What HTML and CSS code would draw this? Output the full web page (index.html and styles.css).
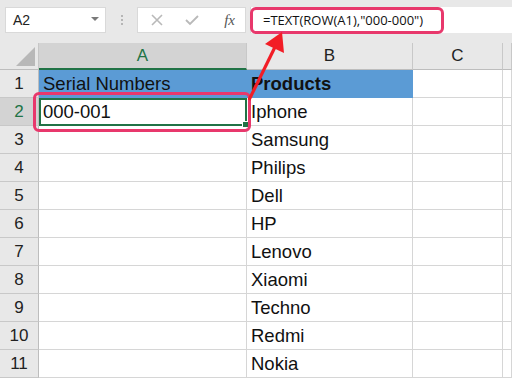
FILE: index.html
```html
<!DOCTYPE html>
<html>
<head>
  <title>Serial Numbers</title>
  <link rel="stylesheet" href="styles.css">
</head>
<body>
  <div class="app">
    <div class="toolbar">
      <div class="namebox">
        <span>A2</span>
        <span class="caret"></span>
      </div>
      <div class="grip"><i></i><i></i><i></i></div>
      <div class="fxbox">
        <svg class="btn" width="14" height="14" viewBox="0 0 14 14"><path d="M2 2 L12 12 M12 2 L2 12" stroke="#b9b9b9" stroke-width="1.6" fill="none"/></svg>
        <svg class="btn" width="16" height="14" viewBox="0 0 16 14"><path d="M2 7 L6 11 L14 3" stroke="#b9b9b9" stroke-width="1.8" fill="none"/></svg>
        <span class="fx">fx</span>
      </div>
      <div class="formula">=TEXT(ROW(A1),"000-000")</div>
    </div>

    <div class="grid">
      <div class="corner"><span class="tri"></span></div>
      <div class="colhead active">A</div>
      <div class="colhead">B</div>
      <div class="colhead">C</div>
      <div class="colhead"></div>

      <div class="rowhead">1</div>
      <div class="cell title">Serial Numbers</div>
      <div class="cell title bold">Products</div>
      <div class="cell"></div>
      <div class="cell"></div>

      <div class="rowhead active">2</div>
      <div class="cell selected">000-001<span class="handle"></span></div>
      <div class="cell">Iphone</div>
      <div class="cell"></div>
      <div class="cell"></div>

      <div class="rowhead">3</div>
      <div class="cell"></div>
      <div class="cell">Samsung</div>
      <div class="cell"></div>
      <div class="cell"></div>

      <div class="rowhead">4</div>
      <div class="cell"></div>
      <div class="cell">Philips</div>
      <div class="cell"></div>
      <div class="cell"></div>

      <div class="rowhead">5</div>
      <div class="cell"></div>
      <div class="cell">Dell</div>
      <div class="cell"></div>
      <div class="cell"></div>

      <div class="rowhead">6</div>
      <div class="cell"></div>
      <div class="cell">HP</div>
      <div class="cell"></div>
      <div class="cell"></div>

      <div class="rowhead">7</div>
      <div class="cell"></div>
      <div class="cell">Lenovo</div>
      <div class="cell"></div>
      <div class="cell"></div>

      <div class="rowhead">8</div>
      <div class="cell"></div>
      <div class="cell">Xiaomi</div>
      <div class="cell"></div>
      <div class="cell"></div>

      <div class="rowhead">9</div>
      <div class="cell"></div>
      <div class="cell">Techno</div>
      <div class="cell"></div>
      <div class="cell"></div>

      <div class="rowhead">10</div>
      <div class="cell"></div>
      <div class="cell">Redmi</div>
      <div class="cell"></div>
      <div class="cell"></div>

      <div class="rowhead">11</div>
      <div class="cell"></div>
      <div class="cell">Nokia</div>
      <div class="cell"></div>
      <div class="cell"></div>
    </div>

    <!-- annotations drawn over the sheet -->
    <div class="mark mark-formula"></div>
    <div class="mark mark-cell"></div>
    <svg class="arrow" width="512" height="378" viewBox="0 0 512 378">
      <line x1="249" y1="100" x2="275" y2="47" stroke="#f21d26" stroke-width="3.2"/>
      <polygon points="282,32 265,44 284,53" fill="#f21d26"/>
    </svg>
  </div>
</body>
</html>
```

FILE: styles.css
```css
body {
  margin: 0;
  background-color: #fff;
}

.app {
  position: relative;
  width: 512px;
  height: 378px;
  overflow: hidden;
  font-family: "Liberation Sans", Arial, sans-serif;
}

.toolbar {
  display: flex;
  align-items: stretch;
  height: 43px;
  box-sizing: border-box;
  padding: 7px 0 10px 5px;
  background-color: #e8e8e8;
}

.namebox {
  width: 101px;
  box-sizing: border-box;
  display: flex;
  align-items: center;
  justify-content: space-between;
  padding: 0 6px 0 7px;
  background-color: #fff;
  border: 1px solid #d9d9d9;
  font-size: 14px;
  color: #222;
}

.caret {
  width: 0;
  height: 0;
  border-left: 4px solid transparent;
  border-right: 4px solid transparent;
  border-top: 4px solid #7a7a7a;
  margin-bottom: 3px;
}

.grip {
  width: 31px;
  display: flex;
  flex-direction: column;
  align-items: center;
  justify-content: center;
  gap: 2px;
}

.grip i {
  width: 2px;
  height: 2px;
  background-color: #b5b5b5;
}

.fxbox {
  width: 109px;
  box-sizing: border-box;
  display: flex;
  align-items: center;
  padding: 0 10px 0 12px;
  gap: 20px;
  background-color: #fff;
  border: 1px solid #d9d9d9;
}

.fx {
  margin-left: auto;
  font-family: "Liberation Serif", serif;
  font-style: italic;
  font-size: 15px;
  color: #555;
}

.formula {
  flex: 1;
  margin-left: 4px;
  display: flex;
  align-items: center;
  padding-left: 12px;
  background-color: #fff;
  border-left: 1px solid #d9d9d9;
  font-family: "Open Sans", sans-serif;
  font-size: 13px;
  color: #111;
}

.grid {
  display: grid;
  grid-template-columns: 39px 208px 166px 90px 1fr;
  grid-template-rows: 27px repeat(11, 28px);
  font-size: 18.5px;
  color: #111;
}

.grid > div {
  box-sizing: border-box;
  border-right: 1px solid #d6d6d6;
  border-bottom: 1px solid #d6d6d6;
}

.corner {
  position: relative;
  background-color: #e8e8e8;
  border-right-color: #c6c6c6 !important;
  border-bottom-color: #bdbdbd !important;
}

.tri {
  position: absolute;
  right: 3px;
  bottom: 3px;
  width: 0;
  height: 0;
  border-left: 19px solid transparent;
  border-bottom: 19px solid #b8b8b8;
}

.colhead {
  background-color: #e8e8e8;
  border-right-color: #c8c8c8 !important;
  border-bottom-color: #bdbdbd !important;
  display: flex;
  align-items: center;
  justify-content: center;
  font-size: 17px;
  color: #222;
}

.colhead.active {
  background-color: #d3d3d3;
  color: #217346;
  border-bottom: 2px solid #217346 !important;
}

.rowhead {
  background-color: #e8e8e8;
  border-right-color: #bdbdbd !important;
  border-bottom-color: #c8c8c8 !important;
  display: flex;
  align-items: center;
  justify-content: center;
  font-size: 17px;
  color: #222;
}

.rowhead.active {
  background-color: #d3d3d3;
  color: #217346;
}

.cell {
  display: flex;
  align-items: center;
  padding-left: 4px;
  white-space: nowrap;
  overflow: hidden;
}

.cell.title {
  background-color: #5b9bd5;
  border-right-color: #5b9bd5 !important;
  border-bottom-color: #5b9bd5 !important;
}

.bold {
  font-weight: bold;
}

.cell.selected {
  position: relative;
  overflow: visible;
  border: 2px solid #217346 !important;
  padding-left: 2px;
}

.handle {
  position: absolute;
  right: -4px;
  bottom: -4px;
  width: 5px;
  height: 5px;
  background-color: #217346;
  border: 1px solid #fff;
}

.mark {
  position: absolute;
  box-sizing: border-box;
  border: 3px solid #e8386c;
  border-radius: 6px;
}

.mark-formula {
  left: 250px;
  top: 7px;
  width: 194px;
  height: 27px;
}

.mark-cell {
  left: 33px;
  top: 92px;
  width: 218px;
  height: 40px;
}

.arrow {
  position: absolute;
  left: 0;
  top: 0;
  pointer-events: none;
}
```
